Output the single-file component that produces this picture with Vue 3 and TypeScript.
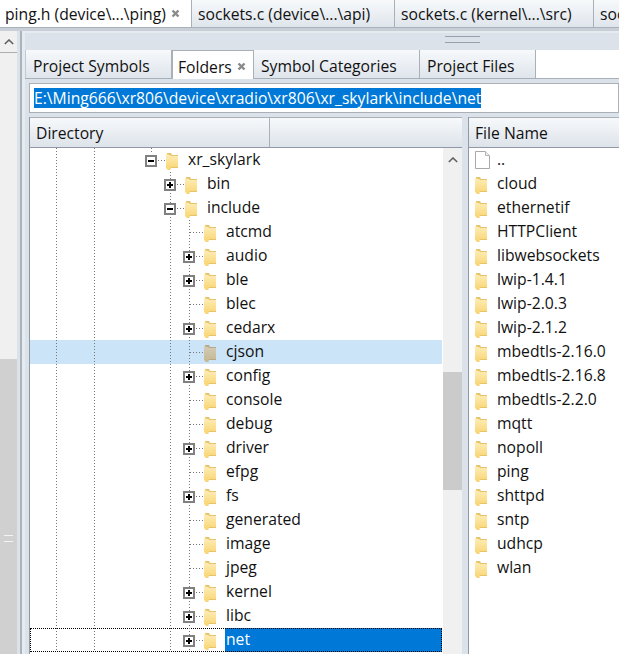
<script setup lang="ts">
type Row = { name: string; toggle?: '+' | '-'; depth: number; state?: 'soft' | 'selected' }

const topTabs = [
  { label: 'ping.h (device\\...\\ping)', active: true, width: 192 },
  { label: 'sockets.c (device\\...\\api)', active: false, width: 203 },
  { label: 'sockets.c (kernel\\...\\src)', active: false, width: 199 },
  { label: 'sockets.c (third', active: false, width: 60 },
]

const innerTabs = [
  { label: 'Project Symbols', active: false, width: 147 },
  { label: 'Folders', active: true, width: 82 },
  { label: 'Symbol Categories', active: false, width: 166 },
  { label: 'Project Files', active: false, width: 116 },
]

const rows: Row[] = [
  { name: 'xr_skylark', toggle: '-', depth: 0 },
  { name: 'bin', toggle: '+', depth: 1 },
  { name: 'include', toggle: '-', depth: 1 },
  { name: 'atcmd', depth: 2 },
  { name: 'audio', toggle: '+', depth: 2 },
  { name: 'ble', toggle: '+', depth: 2 },
  { name: 'blec', depth: 2 },
  { name: 'cedarx', toggle: '+', depth: 2 },
  { name: 'cjson', depth: 2, state: 'soft' },
  { name: 'config', toggle: '+', depth: 2 },
  { name: 'console', depth: 2 },
  { name: 'debug', depth: 2 },
  { name: 'driver', toggle: '+', depth: 2 },
  { name: 'efpg', depth: 2 },
  { name: 'fs', toggle: '+', depth: 2 },
  { name: 'generated', depth: 2 },
  { name: 'image', depth: 2 },
  { name: 'jpeg', depth: 2 },
  { name: 'kernel', toggle: '+', depth: 2 },
  { name: 'libc', toggle: '+', depth: 2 },
  { name: 'net', toggle: '+', depth: 2, state: 'selected' },
]

const files = [
  'cloud', 'ethernetif', 'HTTPClient', 'libwebsockets', 'lwip-1.4.1', 'lwip-2.0.3',
  'lwip-2.1.2', 'mbedtls-2.16.0', 'mbedtls-2.16.8', 'mbedtls-2.2.0', 'mqtt', 'nopoll',
  'ping', 'shttpd', 'sntp', 'udhcp', 'wlan',
]

// Tree columns are 19px wide; guides at columns 0, 2 and 6 run through every row.
const columns = [0, 1, 2, 3, 4, 5, 6, 7]
function cellClass(row: Row, col: number, index: number): string[] {
  const out: string[] = []
  const own = row.depth + 5
  if (col === 0 || col === 2) out.push('guide')
  if (col === 5 && index === 0) out.push('guide-top')
  if (col === 6 && index > 0) out.push('guide')
  if (col === 6 && index === 0) out.push('guide-bottom')
  if (col === 7 && index >= 3) out.push('guide')
  if (col === own) out.push('branch')
  return out
}
</script>

<template>
  <div class="app">
    <div class="top-tabs">
      <div
        v-for="tab in topTabs"
        :key="tab.label"
        class="top-tab"
        :class="{ active: tab.active }"
        :style="{ width: tab.width + 'px' }"
      >
        <span class="tab-label">{{ tab.label }}</span>
        <svg v-if="tab.active" class="close" viewBox="0 0 9 9" width="9" height="9">
          <path d="M1.500 1.500 7.500 7.500M7.500 1.500 1.500 7.500" />
        </svg>
      </div>
    </div>

    <div class="body">
      <div class="gutter">
        <div class="gutter-up">
          <svg viewBox="0 0 10 6" width="10" height="6"><path d="M.8 5 5 1l4.2 4" /></svg>
        </div>
        <div class="gutter-track"></div>
        <div class="gutter-thumb"><span class="grip"></span></div>
      </div>
      <div class="sash-v"></div>

      <div class="panel">
        <div class="panel-bar"><span class="panel-grip"></span></div>
        <div class="inner-tabs">
          <div
            v-for="tab in innerTabs"
            :key="tab.label"
            class="inner-tab"
            :class="{ active: tab.active }"
            :style="{ width: tab.width + 'px' }"
          >
            <span>{{ tab.label }}</span>
            <svg v-if="tab.active" class="close" viewBox="0 0 9 9" width="9" height="9">
              <path d="M1.500 1.500 7.500 7.500M7.500 1.500 1.500 7.500" />
            </svg>
          </div>
        </div>

        <div class="content">
          <div class="path-box">
            <span class="path-text">E:\Ming666\xr806\device\xradio\xr806\xr_skylark\include\net</span>
          </div>

          <div class="split">
            <div class="dir-pane">
              <div class="header dir-header">
                <div class="dir-col">Directory</div>
                <div class="dir-col-rest"></div>
              </div>
              <div class="dir-body">
                <div class="tree">
                  <div
                    v-for="(row, i) in rows"
                    :key="row.name"
                    class="tree-row"
                    :class="row.state"
                  >
                    <div class="indent"></div>
                    <template v-for="col in columns" :key="col">
                      <div
                        v-if="col <= row.depth + 5"
                        class="cell"
                        :class="cellClass(row, col, i)"
                      >
                        <span v-if="col === row.depth + 5 && row.toggle" class="toggle">
                          <i class="bar-h"></i>
                          <i v-if="row.toggle === '+'" class="bar-v"></i>
                        </span>
                      </div>
                    </template>
                    <svg class="folder" viewBox="0 0 12 17" width="12" height="17">
                      <defs>
                        <linearGradient :id="'fg' + i" x1="0" y1="0" x2="0" y2="1">
                          <stop offset="0" stop-color="#fdeeb9" />
                          <stop offset="1" stop-color="#f9d470" />
                        </linearGradient>
                      </defs>
                      <path class="folder-back" d="M1 0h4l1 2h6v13H1z" />
                      <path :fill="'url(#fg' + i + ')'" d="M0 1l5 1.500V3h7v11H5l-.5 3H2L0 15z" />
                    </svg>
                    <span class="tree-label">{{ row.name }}</span>
                  </div>
                </div>
                <div class="tree-scroll">
                  <div class="scroll-up">
                    <svg viewBox="0 0 10 6" width="10" height="6"><path d="M.8 5 5 1l4.2 4" /></svg>
                  </div>
                  <div class="scroll-gap"></div>
                  <div class="scroll-thumb"></div>
                </div>
              </div>
            </div>

            <div class="split-sash"></div>

            <div class="file-pane">
              <div class="header file-header">File Name</div>
              <div class="file-row">
                <svg class="doc" viewBox="0 0 15 18" width="15" height="18">
                  <path d="M.5.5h10l4 4v13H.5z" fill="#fff" stroke="#a9a9a9" />
                  <path d="M10.500.5v4h4" fill="#eee" stroke="#b5b5b5" />
                </svg>
                <span class="file-label dots">..</span>
              </div>
              <div v-for="(file, i) in files" :key="file" class="file-row">
                <svg class="folder file-folder" viewBox="0 0 12 17" width="12" height="17">
                  <defs>
                    <linearGradient :id="'ff' + i" x1="0" y1="0" x2="0" y2="1">
                      <stop offset="0" stop-color="#fdeeb9" />
                      <stop offset="1" stop-color="#f9d470" />
                    </linearGradient>
                  </defs>
                  <path class="folder-back" d="M1 0h4l1 2h6v13H1z" />
                  <path :fill="'url(#ff' + i + ')'" d="M0 1l5 1.500V3h7v11H5l-.5 3H2L0 15z" />
                </svg>
                <span class="file-label">{{ file }}</span>
              </div>
            </div>
          </div>
        </div>
      </div>
    </div>
  </div>
</template>

<style>
html, body { margin: 0; background: #fff; overflow: hidden; }
</style>

<style scoped>
.app {
  width: 619px;
  height: 654px;
  overflow: hidden;
  display: flex;
  flex-direction: column;
  font-family: "Open Sans", "Noto Sans", sans-serif;
  font-size: 15.7px;
  color: #111;
  background: #fff;
}

/* top editor tabs */
.top-tabs {
  display: flex;
  height: 27px;
  flex: none;
  overflow: hidden;
  border-bottom: 1px solid #a9b0b8;
  box-sizing: content-box;
}
.top-tab {
  flex: none;
  box-sizing: border-box;
  display: flex;
  align-items: center;
  padding-left: 6px;
  white-space: nowrap;
  overflow: hidden;
  border-right: 1px solid #a9b0b8;
  background: linear-gradient(#f7f9fb, #dfe5ec);
}
.top-tab.active {
  background: #fff;
  padding-left: 5px;
}
.tab-label { flex: none; }
.close {
  flex: none;
  margin-left: 5px;
  fill: none;
  stroke: #8a8a8a;
  stroke-width: 2.4;
}

.body {
  flex: 1;
  min-height: 0;
  display: flex;
  border-top: 3px solid #c9cfd6;
}

/* far-left scrollbar */
.gutter {
  flex: none;
  width: 17px;
  display: flex;
  flex-direction: column;
  background: #f0f0f0;
}
.gutter-up {
  height: 21px;
  display: flex;
  align-items: center;
  justify-content: center;
  border-bottom: 1px solid #adadad;
}
.gutter-up svg, .scroll-up svg { fill: none; stroke: #606060; stroke-width: 1.6; }
.gutter-track { height: 306px; }
.gutter-thumb {
  flex: 1;
  background: #d0d0d0;
  display: flex;
  justify-content: center;
  padding-top: 176px;
}
.grip {
  width: 9px;
  height: 5px;
  border-top: 1px solid #f4f4f4;
  border-bottom: 1px solid #f4f4f4;
}
.sash-v {
  flex: none;
  width: 3px;
  background: #dbe2ea;
  border-right: 2px solid #abb3bd;
}

/* panel */
.panel {
  flex: 1;
  min-width: 0;
  display: flex;
  flex-direction: column;
  padding-left: 3px;
  background: #e6ebf0;
}
.panel-bar {
  height: 17px;
  flex: none;
  margin-top: 2px;
  background: #dbe2ea;
  display: flex;
  justify-content: flex-end;
  padding-right: 139px;
}
.panel-grip {
  width: 35px;
  height: 5px;
  margin-top: 3px;
  border-top: 1px solid #98a0aa;
  border-bottom: 1px solid #98a0aa;
}
.inner-tabs {
  display: flex;
  flex: none;
  height: 29px;
  border-bottom: 1px solid #a9b0b8;
  background: #fff;
  box-sizing: border-box;
}
.inner-tab {
  flex: none;
  box-sizing: border-box;
  display: flex;
  align-items: center;
  padding-left: 7px;
  padding-top: 3px;
  border-right: 1px solid #a9b0b8;
  background: linear-gradient(#f7f9fb, #dfe5ec);
  white-space: nowrap;
}
.inner-tab.active {
  background: #fff;
  border: 1px solid #a9b0b8;
  border-bottom: 0;
  height: 29px;
  padding-left: 5px;
}
.inner-tab:first-child { border-left: 1px solid #c3c9d0; }

.content {
  flex: 1;
  min-height: 0;
  display: flex;
  flex-direction: column;
  background: #dbe2ea;
  padding-left: 4px;
  padding-top: 4px;
  margin-left: 0;
}
.path-box {
  flex: none;
  height: 30px;
  box-sizing: border-box;
  background: #fff;
  border: 1px solid #a9b0b8;
  padding: 4px 4px;
  line-height: 20px;
}
.path-text {
  display: inline-block;
  background: #0078d7;
  color: #fff;
  height: 20px;
  white-space: nowrap;
}
.split {
  flex: 1;
  min-height: 0;
  margin-top: 4px;
  display: flex;
}
.dir-pane {
  flex: none;
  width: 433px;
  display: flex;
  flex-direction: column;
  border-left: 1px solid #8f98a3;
  box-sizing: border-box;
  background: #fff;
}
.header {
  height: 31px;
  flex: none;
  box-sizing: border-box;
  background: linear-gradient(#f7f9fb, #dde3ea);
  border-top: 1px solid #a9b0b8;
  border-bottom: 1px solid #8f98a3;
  display: flex;
  align-items: center;
}
.dir-col {
  width: 240px;
  height: 100%;
  box-sizing: border-box;
  padding-left: 6px;
  display: flex;
  align-items: center;
  border-right: 1px solid #a9b0b8;
}
.dir-body { flex: 1; min-height: 0; display: flex; }
.tree { width: 412px; flex: none; }
.tree-row {
  height: 24px;
  display: flex;
  align-items: center;
  box-sizing: border-box;
  white-space: nowrap;
}
.indent { width: 17px; height: 100%; flex: none; }
.cell {
  width: 19px;
  height: 100%;
  flex: none;
  position: relative;
}
.guide::before, .guide-top::before, .guide-bottom::before {
  content: "";
  position: absolute;
  left: 9px;
  top: 0;
  bottom: 0;
  width: 1px;
  background: repeating-linear-gradient(#777 0 1px, transparent 1px 3px);
}
.guide-top::before { bottom: 18px; }
.guide-bottom::before { top: 14px; }
.branch::after {
  content: "";
  position: absolute;
  left: 10px;
  top: 12px;
  width: 14px;
  height: 1px;
  background: repeating-linear-gradient(90deg, #777 0 1px, transparent 1px 3px);
}
.toggle {
  position: absolute;
  left: 3px;
  top: 7px;
  width: 12px;
  height: 12px;
  box-sizing: border-box;
  border: 2px solid #808080;
  background: #fff;
  z-index: 1;
}
.bar-h, .bar-v { position: absolute; background: #000; }
.bar-h { left: 1px; top: 3px; width: 6px; height: 2px; }
.bar-v { left: 3px; top: 1px; width: 2px; height: 6px; }

.folder { flex: none; margin-left: 5px; margin-top: 3px; position: relative; z-index: 1; }
.folder-back { fill: #e8c468; }
.tree-label {
  margin-left: 8px;
  padding: 0 2px;
  height: 100%;
  line-height: 22px;
}
.tree-row.soft { background: #cce4f7; }
.tree-row.soft .folder { filter: grayscale(0.55) brightness(0.86); }
.tree-row.selected {
  outline: 1px dotted #000;
  outline-offset: -1px;
}
.tree-row.selected .tree-label {
  flex: 1;
  margin-left: 9px;
  background: #0078d7;
  color: #fff;
  padding-left: 1px;
}
.tree-scroll {
  width: 20px;
  flex: none;
  background: #f0f0f0;
  display: flex;
  flex-direction: column;
  margin-left: 1px;
}
.scroll-up {
  height: 24px;
  flex: none;
  display: flex;
  align-items: center;
  justify-content: center;
}
.scroll-gap { height: 200px; flex: none; }
.scroll-thumb { height: 118px; flex: none; background: #cbcbcb; }

.split-sash { width: 6px; flex: none; background: #dbe2ea; }
.file-pane {
  flex: 1;
  min-width: 0;
  background: #fff;
  border-left: 1px solid #8f98a3;
}
.file-header { padding-left: 6px; }
.file-row {
  height: 24px;
  display: flex;
  align-items: center;
  white-space: nowrap;
}
.doc { margin-left: 6px; flex: none; }
.file-folder { margin-left: 6px; }
.file-label { margin-left: 10px; line-height: 22px; height: 24px; }
.dots { margin-left: 7px; }
</style>
